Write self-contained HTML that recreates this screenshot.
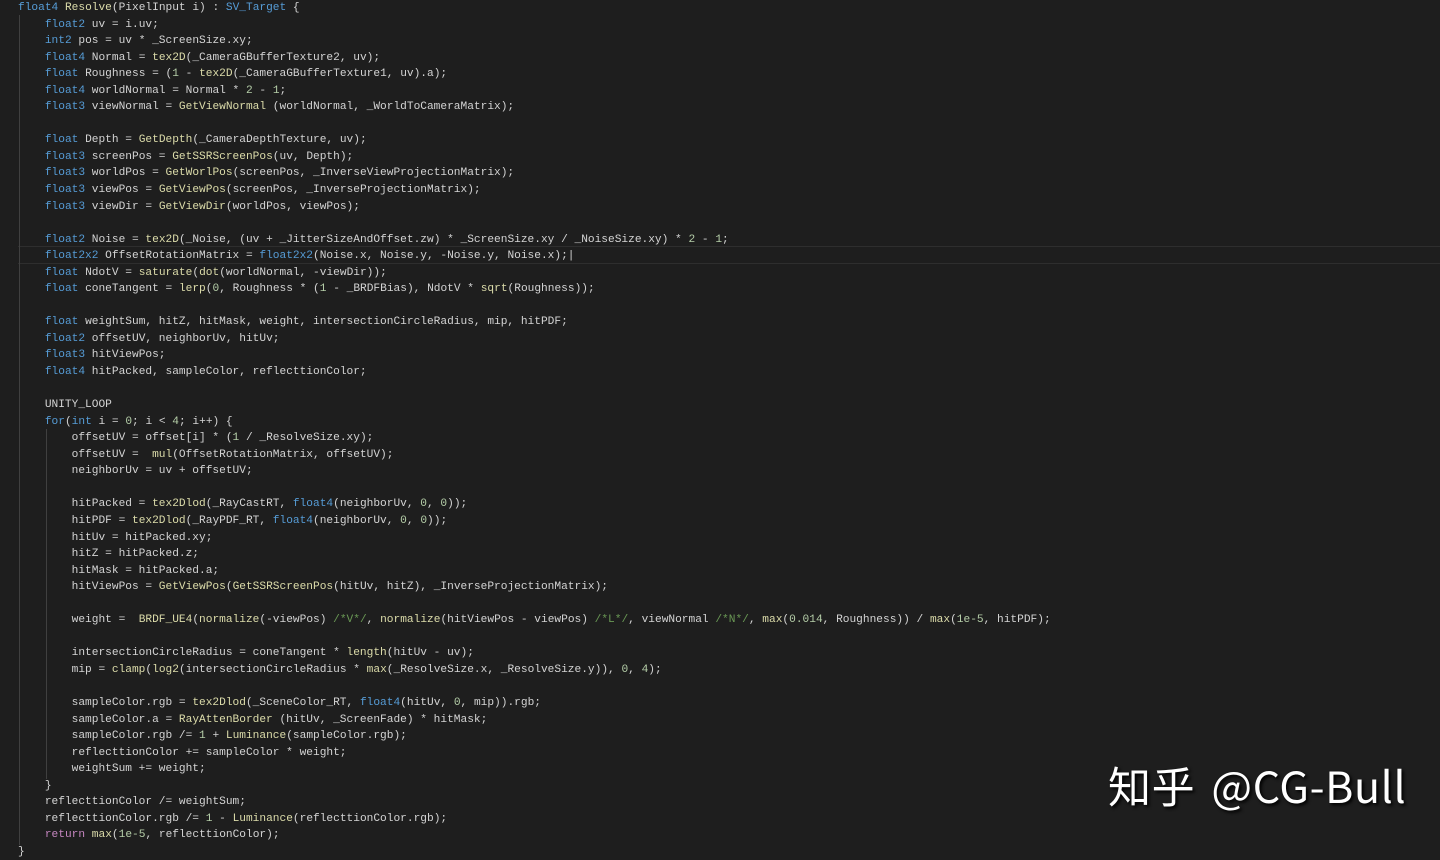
<!DOCTYPE html>
<html><head><meta charset="utf-8"><style>
html,body{margin:0;padding:0;background:#1e1e1e;width:1440px;height:850px;overflow:hidden}
pre{position:absolute;left:18px;top:0px;margin:0;font-family:"Liberation Mono",monospace;font-size:11.18px;line-height:16.54px;color:#d4d4d4;white-space:pre}
.t{color:#569cd6}.f{color:#dcdcaa}.n{color:#b5cea8}.c{color:#6a9955}.k{color:#c586c0}
.g{position:absolute;width:1px;background:#404040}
.cur{position:absolute;left:18px;right:0;top:246px;height:16px;border-top:1px solid #2e2e2e;border-bottom:1px solid #2e2e2e}
.wm{position:absolute;left:1108px;top:750px;font-family:"Noto Sans CJK SC","Liberation Sans",sans-serif;font-size:43px;line-height:70px;color:#fff;text-shadow:2px 2px 3px #000;white-space:nowrap;letter-spacing:0.6px;word-spacing:6px}
</style></head><body>
<div class="cur"></div>
<div class="g" style="left:19px;top:15px;height:830px"></div>
<div class="g" style="left:46px;top:429px;height:350px"></div>
<pre><span class="t">float4</span> <span class="f">Resolve</span>(PixelInput i) : <span class="t">SV_Target</span> {
    <span class="t">float2</span> uv = i.uv;
    <span class="t">int2</span> pos = uv * _ScreenSize.xy;
    <span class="t">float4</span> Normal = <span class="f">tex2D</span>(_CameraGBufferTexture2, uv);
    <span class="t">float</span> Roughness = (<span class="n">1</span> - <span class="f">tex2D</span>(_CameraGBufferTexture1, uv).a);
    <span class="t">float4</span> worldNormal = Normal * <span class="n">2</span> - <span class="n">1</span>;
    <span class="t">float3</span> viewNormal = <span class="f">GetViewNormal</span> (worldNormal, _WorldToCameraMatrix);

    <span class="t">float</span> Depth = <span class="f">GetDepth</span>(_CameraDepthTexture, uv);
    <span class="t">float3</span> screenPos = <span class="f">GetSSRScreenPos</span>(uv, Depth);
    <span class="t">float3</span> worldPos = <span class="f">GetWorlPos</span>(screenPos, _InverseViewProjectionMatrix);
    <span class="t">float3</span> viewPos = <span class="f">GetViewPos</span>(screenPos, _InverseProjectionMatrix);
    <span class="t">float3</span> viewDir = <span class="f">GetViewDir</span>(worldPos, viewPos);

    <span class="t">float2</span> Noise = <span class="f">tex2D</span>(_Noise, (uv + _JitterSizeAndOffset.zw) * _ScreenSize.xy / _NoiseSize.xy) * <span class="n">2</span> - <span class="n">1</span>;
    <span class="t">float2x2</span> OffsetRotationMatrix = <span class="t">float2x2</span>(Noise.x, Noise.y, -Noise.y, Noise.x);|
    <span class="t">float</span> NdotV = <span class="f">saturate</span>(<span class="f">dot</span>(worldNormal, -viewDir));
    <span class="t">float</span> coneTangent = <span class="f">lerp</span>(<span class="n">0</span>, Roughness * (<span class="n">1</span> - _BRDFBias), NdotV * <span class="f">sqrt</span>(Roughness));

    <span class="t">float</span> weightSum, hitZ, hitMask, weight, intersectionCircleRadius, mip, hitPDF;
    <span class="t">float2</span> offsetUV, neighborUv, hitUv;
    <span class="t">float3</span> hitViewPos;
    <span class="t">float4</span> hitPacked, sampleColor, reflecttionColor;

    UNITY_LOOP
    <span class="t">for</span>(<span class="t">int</span> i = <span class="n">0</span>; i &lt; <span class="n">4</span>; i++) {
        offsetUV = offset[i] * (<span class="n">1</span> / _ResolveSize.xy);
        offsetUV =  <span class="f">mul</span>(OffsetRotationMatrix, offsetUV);
        neighborUv = uv + offsetUV;

        hitPacked = <span class="f">tex2Dlod</span>(_RayCastRT, <span class="t">float4</span>(neighborUv, <span class="n">0</span>, <span class="n">0</span>));
        hitPDF = <span class="f">tex2Dlod</span>(_RayPDF_RT, <span class="t">float4</span>(neighborUv, <span class="n">0</span>, <span class="n">0</span>));
        hitUv = hitPacked.xy;
        hitZ = hitPacked.z;
        hitMask = hitPacked.a;
        hitViewPos = <span class="f">GetViewPos</span>(<span class="f">GetSSRScreenPos</span>(hitUv, hitZ), _InverseProjectionMatrix);

        weight =  <span class="f">BRDF_UE4</span>(<span class="f">normalize</span>(-viewPos) <span class="c">/*V*/</span>, <span class="f">normalize</span>(hitViewPos - viewPos) <span class="c">/*L*/</span>, viewNormal <span class="c">/*N*/</span>, <span class="f">max</span>(<span class="n">0.014</span>, Roughness)) / <span class="f">max</span>(<span class="n">1e-5</span>, hitPDF);

        intersectionCircleRadius = coneTangent * <span class="f">length</span>(hitUv - uv);
        mip = <span class="f">clamp</span>(<span class="f">log2</span>(intersectionCircleRadius * <span class="f">max</span>(_ResolveSize.x, _ResolveSize.y)), <span class="n">0</span>, <span class="n">4</span>);

        sampleColor.rgb = <span class="f">tex2Dlod</span>(_SceneColor_RT, <span class="t">float4</span>(hitUv, <span class="n">0</span>, mip)).rgb;
        sampleColor.a = <span class="f">RayAttenBorder</span> (hitUv, _ScreenFade) * hitMask;
        sampleColor.rgb /= <span class="n">1</span> + <span class="f">Luminance</span>(sampleColor.rgb);
        reflecttionColor += sampleColor * weight;
        weightSum += weight;
    }
    reflecttionColor /= weightSum;
    reflecttionColor.rgb /= <span class="n">1</span> - <span class="f">Luminance</span>(reflecttionColor.rgb);
    <span class="k">return</span> <span class="f">max</span>(<span class="n">1e-5</span>, reflecttionColor);
}</pre>
<div class="wm">知乎 @CG-Bull</div>
</body></html>
